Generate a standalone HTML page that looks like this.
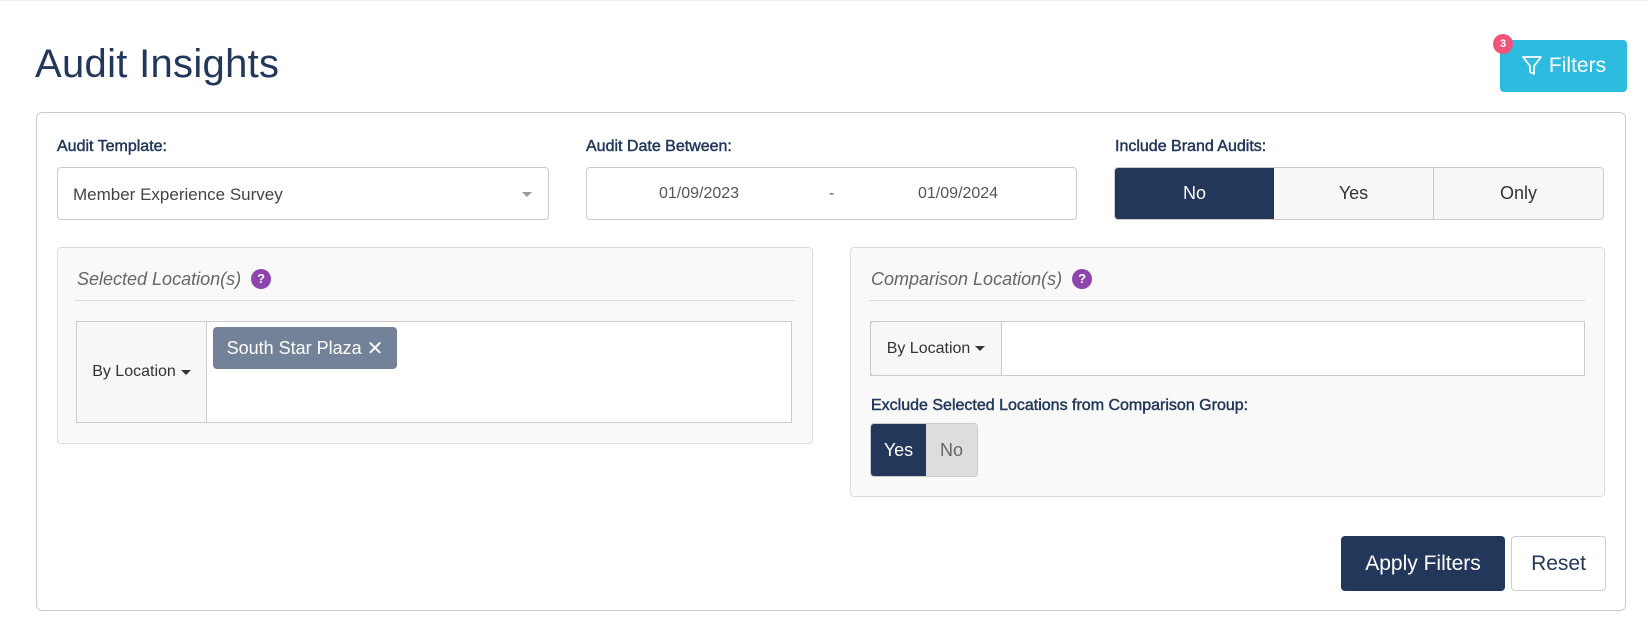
<!DOCTYPE html>
<html><head><meta charset="utf-8"><style>
*{box-sizing:border-box;margin:0;padding:0}
body{width:1648px;height:617px;background:#fff;font-family:"Liberation Sans",sans-serif;color:#333;position:relative;overflow:hidden;border-top:1px solid #eee}
.a{position:absolute}
.lbl{position:absolute;font-size:16px;color:#22375a;-webkit-text-stroke:0.45px #22375a}
.box{position:absolute;border:1px solid #ccc;border-radius:4px;background:#fff}
.panel{position:absolute;border:1px solid #ddd;border-radius:4px;background:#f9f9f9}
.ptitle{position:absolute;font-style:italic;font-size:18px;color:#666}
.q{display:inline-block;width:20px;height:20px;border-radius:50%;background:#8e44ad;color:#fff;font-size:13px;font-weight:bold;font-style:normal;text-align:center;line-height:20px;margin-left:10px;vertical-align:2px}
.hr{position:absolute;height:1px;background:#ddd}
.caret{display:inline-block;width:0;height:0;border-left:5px solid transparent;border-right:5px solid transparent;border-top:5px solid #333;vertical-align:3px;margin-left:5px}
.c{display:flex;align-items:center;justify-content:center}
</style></head><body>
<div class="a" style="left:35px;top:39px;font-size:40px;color:#22375a;line-height:48px;letter-spacing:0.3px">Audit Insights</div>
<div class="a c" style="left:1500px;top:39px;width:127px;height:52px;background:#2dbbe0;border-radius:4px;color:#fff;font-size:21px">
<svg width="22" height="24" viewBox="0 0 22 24" style="margin-right:6px"><path d="M2 3h18l-7 9v8l-4-2v-6z" fill="none" stroke="#fff" stroke-width="1.8" stroke-linejoin="round"/></svg>Filters</div>
<div class="a c" style="left:1493px;top:33px;width:20px;height:20px;border-radius:50%;background:#f0547a;color:#fff;font-size:11px;font-weight:bold">3</div>

<div class="a" style="left:36px;top:111px;width:1590px;height:499px;border:1px solid #ccc;border-radius:6px"></div>

<div class="lbl" style="left:57px;top:137px">Audit Template:</div>
<div class="box" style="left:57px;top:166px;width:492px;height:53px"></div>
<div class="a" style="left:73px;top:184px;font-size:17px;color:#444">Member Experience Survey</div>
<div class="a" style="left:522px;top:191px;border-left:5px solid transparent;border-right:5px solid transparent;border-top:5px solid #999"></div>

<div class="lbl" style="left:586px;top:137px">Audit Date Between:</div>
<div class="box" style="left:586px;top:166px;width:491px;height:53px"></div>
<div class="a" style="left:659px;top:184px;font-size:16px;color:#555">01/09/2023</div>
<div class="a" style="left:829px;top:184px;font-size:16px;color:#555">-</div>
<div class="a" style="left:918px;top:184px;font-size:16px;color:#555">01/09/2024</div>

<div class="lbl" style="left:1115px;top:137px">Include Brand Audits:</div>
<div class="a" style="left:1114px;top:166px;width:490px;height:53px;border:1px solid #ccc;border-radius:4px;overflow:hidden;display:flex;font-size:18px">
<div class="c" style="width:159px;background:#22375a;color:#fff">No</div>
<div class="c" style="width:160px;background:#f7f7f7;color:#333;border-right:1px solid #ccc">Yes</div>
<div class="c" style="flex:1;background:#f7f7f7;color:#333">Only</div>
</div>

<div class="panel" style="left:57px;top:246px;width:756px;height:197px"></div>
<div class="ptitle" style="left:77px;top:268px">Selected Location(s)<span class="q">?</span></div>
<div class="hr" style="left:75px;top:299px;width:720px"></div>
<div class="a" style="left:76px;top:320px;width:716px;height:102px;border:1px solid #ccc;background:#fff"></div>
<div class="a c" style="left:76px;top:320px;width:131px;height:102px;border:1px solid #ccc;background:#f7f7f7;font-size:16px;color:#333">By Location<span class="caret"></span></div>
<div class="a c" style="left:213px;top:326px;width:184px;height:42px;background:#738299;border-radius:4px;color:#fff;font-size:18px">South Star Plaza&nbsp;<span style="font-size:20px">✕</span></div>

<div class="panel" style="left:850px;top:246px;width:755px;height:250px"></div>
<div class="ptitle" style="left:871px;top:268px">Comparison Location(s)<span class="q">?</span></div>
<div class="hr" style="left:869px;top:299px;width:716px"></div>
<div class="a" style="left:870px;top:320px;width:715px;height:55px;border:1px solid #ccc;background:#fff"></div>
<div class="a c" style="left:870px;top:320px;width:132px;height:55px;border:1px solid #ccc;border-radius:4px 0 0 4px;background:#f7f7f7;font-size:16px;color:#333">By Location<span class="caret"></span></div>
<div class="lbl" style="left:871px;top:396px">Exclude Selected Locations from Comparison Group:</div>
<div class="a" style="left:870px;top:422px;width:108px;height:54px;border:1px solid #ccc;border-radius:4px;overflow:hidden;display:flex;font-size:18px">
<div class="c" style="width:55px;background:#22375a;color:#fff">Yes</div>
<div class="c" style="flex:1;background:#ddd;color:#666">No</div>
</div>

<div class="a c" style="left:1341px;top:535px;width:164px;height:55px;background:#22375a;border-radius:4px;color:#fff;font-size:21px">Apply Filters</div>
<div class="a c" style="left:1511px;top:535px;width:95px;height:55px;border:1px solid #ccc;border-radius:4px;color:#22375a;font-size:21px">Reset</div>
</body></html>
